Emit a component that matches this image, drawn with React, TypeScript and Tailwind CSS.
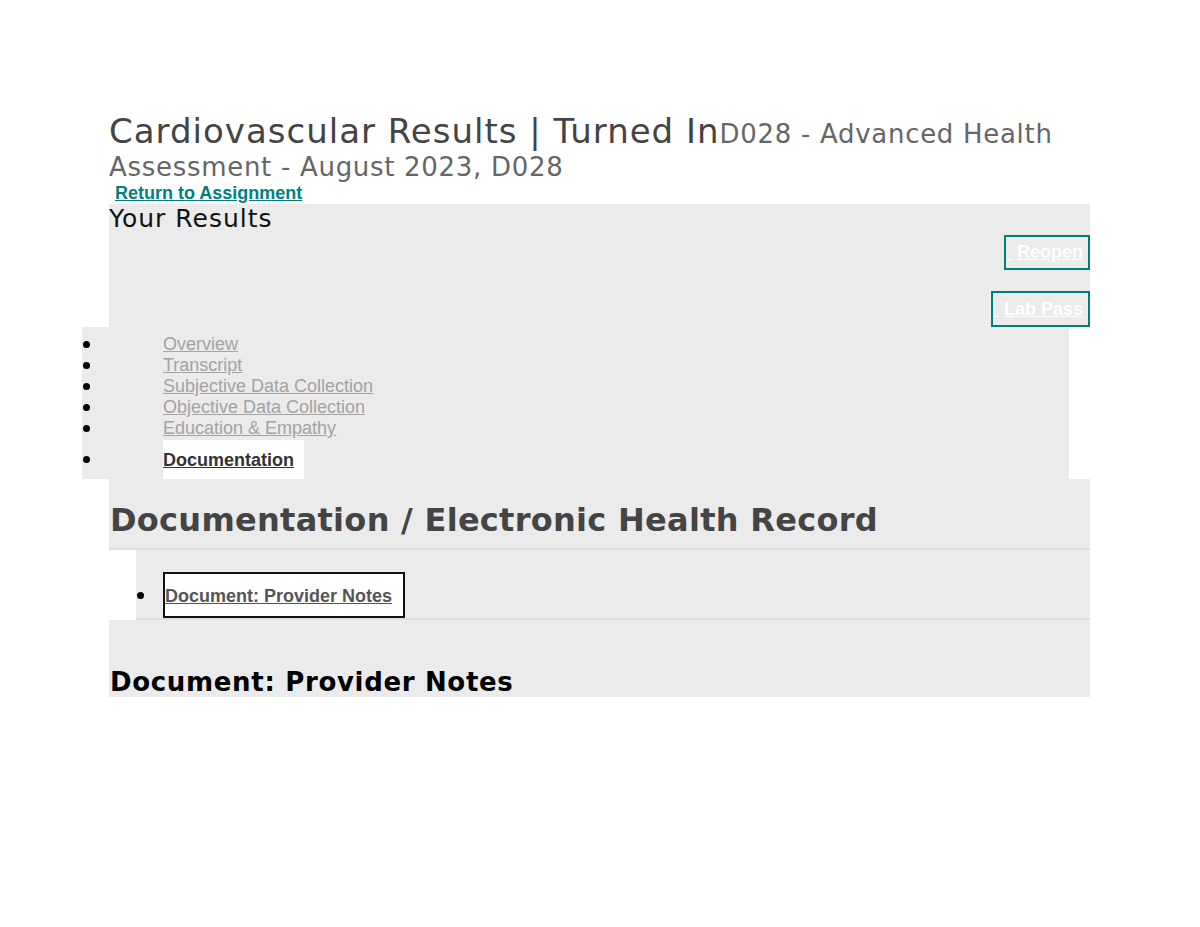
import React from "react";

const dv = { fontFamily: '"DejaVu Sans", Verdana, sans-serif' };
const ls = { fontFamily: '"Liberation Sans", Arial, sans-serif' };

function Bullet() {
  return <span className="inline-block w-[7px] h-[7px] rounded-full bg-black shrink-0" />;
}

const navItems = [
  "Overview",
  "Transcript",
  "Subjective Data Collection",
  "Objective Data Collection",
  "Education & Empathy",
];

export default function App() {
  return (
    <div className="min-h-[927px] w-[1200px] bg-white">
      <div className="ml-[109px] w-[981px] pt-[115px]">
        <div className="h-[66px] text-[34px] leading-[33px] tracking-[1px] text-[#444444]" style={dv}>
          <span>Cardiovascular Results | Turned In</span>
          <span className="text-[26px] leading-[27px] tracking-[0.7px] text-[#666666]">D028 - Advanced Health Assessment - August 2023, D028</span>
        </div>
        <div className="mt-[2px] h-[21px] leading-[20px] text-[18px] font-bold" style={ls}>
          <a className="text-[#00807f] underline pl-[6px]" href="#">Return to Assignment</a>
        </div>

        <div className="bg-[#ebebeb] h-[123px] flex flex-col">
          <div className="text-[25px] leading-[29px] tracking-[1px] text-[#111111]" style={dv}>Your Results</div>
          <div className="flex justify-end mt-[2px]">
            <div className="h-[35px] border-2 border-[#007f7f] flex items-center pl-[1px] pr-[5px] text-[18px] leading-[21px] font-bold text-white" style={ls}>
              <span className="underline">{"\u00a0"}</span>
              <span className="underline pl-[5px]">Reopen</span>
            </div>
          </div>
          <div className="flex justify-end mt-[21px]">
            <div className="h-[36px] border-2 border-[#007f7f] flex items-center pl-[1px] pr-[5px] text-[18px] leading-[21px] font-bold text-white" style={ls}>
              <span className="underline">{"\u00a0"}</span>
              <span className="underline pl-[5px]">Lab Pass</span>
            </div>
          </div>
        </div>

        <ul className="ml-[-27px] w-[987px] bg-[#ebebeb] pt-[7px] text-[18px] leading-[21px]" style={ls}>
          {navItems.map((t) => (
            <li key={t} className="flex items-center h-[21px]">
              <span className="w-[81px] pl-[1px] flex items-center"><Bullet /></span>
              <a href="#" className="text-[#a3a3a3] underline">{t}</a>
            </li>
          ))}
          <li className="flex items-center h-[40px]">
            <span className="w-[81px] pl-[1px] flex items-center"><Bullet /></span>
            <a href="#" className="bg-white h-[39px] pt-[10px] pr-[10px] leading-[21px] font-bold text-[#333333] underline">
              Documentation
            </a>
          </li>
        </ul>

        <div className="bg-[#ebebeb] pt-[23px] pb-[9px] border-b-2 border-[#dddddd]">
          <h2 className="text-[32px] leading-[37px] tracking-[0.28px] font-bold text-[#444444] pl-[1px]" style={dv}>
            Documentation / Electronic Health Record
          </h2>
        </div>

        <div className="flex">
          <div className="w-[27px] bg-white" />
          <div className="flex-1 bg-[#ebebeb] border-b-2 border-[#dddddd] pt-[22px] flex items-center">
            <span className="w-[27px] flex items-center pl-[1px]"><Bullet /></span>
            <div className="bg-white border-2 border-[#111111] pt-[12px] pb-[9px] pr-[11px] text-[18px] leading-[21px] font-bold" style={ls}>
              <a href="#" className="text-[#555555] underline">Document: Provider Notes</a>
            </div>
          </div>
        </div>

        <div className="bg-[#ebebeb] pt-[47px]">
          <h3 className="text-[26px] leading-[30px] tracking-[0.67px] font-bold text-black pl-[1px]" style={dv}>
            Document: Provider Notes
          </h3>
        </div>
      </div>
    </div>
  );
}
